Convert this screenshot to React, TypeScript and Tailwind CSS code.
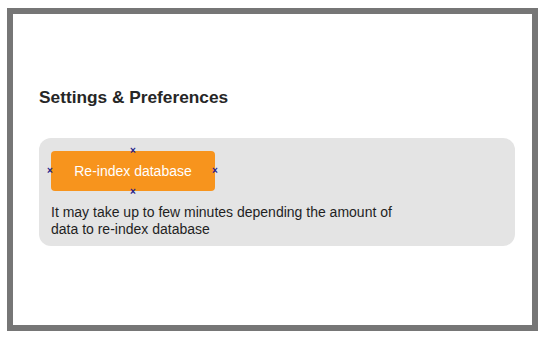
import React from 'react';

// small selection handle drawn over the button edges
function Handle({ className }: { className: string }) {
  return (
    <span className={`absolute text-[10px] font-bold leading-none text-[#1c1c8a] ${className}`}>×</span>
  );
}

export default function App() {
  return (
    <div className="w-[553px] h-[343px] bg-white pt-[8px] pl-[7px]" style={{ fontFamily: '"Liberation Sans", Arial, sans-serif' }}>
      <div className="w-[531px] h-[323px] border-[6px] border-[#767676] bg-white pt-[73px] pl-[26px] pr-[17px] flex flex-col">
        <h1 className="text-[17.3px] leading-[20px] font-bold text-[#262626]">Settings &amp; Preferences</h1>

        <div className="mt-[31px] h-[108px] rounded-[12px] bg-[#e4e4e4] pt-[13px] pl-[12px] flex flex-col items-start gap-[13px]">
          <div className="relative">
            <button className="w-[164px] h-[40px] rounded-[4px] bg-[#f7941d] text-white text-[14px]">
              Re-index database
            </button>
            <Handle className="left-[79px] -top-[5px]" />
            <Handle className="-left-[4px] top-[15px]" />
            <Handle className="left-[161px] top-[15px]" />
            <Handle className="left-[79px] top-[36px]" />
          </div>
          <p className="w-[360px] text-[14px] leading-[17px] text-[#1f1f1f]">
            It may take up to few minutes depending the amount of data to re-index database
          </p>
        </div>
      </div>
    </div>
  );
}
